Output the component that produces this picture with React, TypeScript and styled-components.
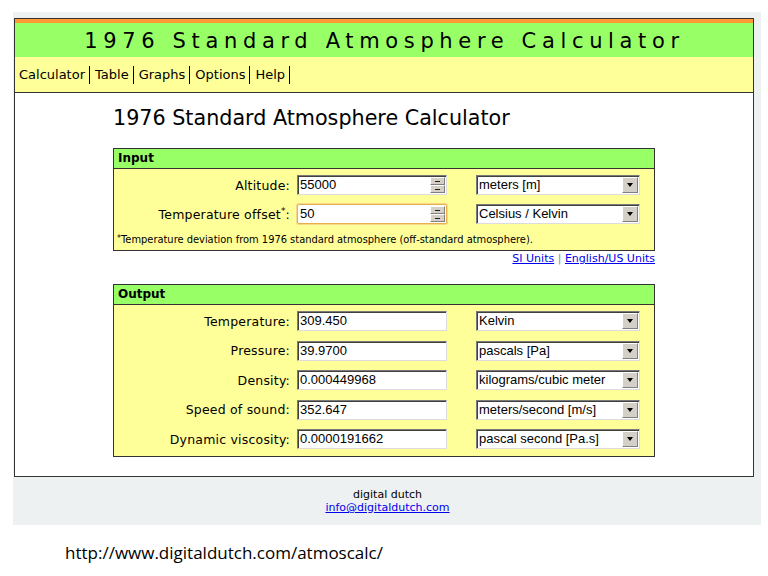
import React from 'react';
import styled, { createGlobalStyle } from 'styled-components';

const colors = {
  orange: '#ff9933',
  green: '#99ff66',
  yellow: '#ffff99',
  border: '#333333',
  panel: '#eef1f1',
  link: '#0000ee',
  field: '#7a7a7a',
  button: '#d4d0c8',
};

const verdana = '"DejaVu Sans", Verdana, sans-serif';
const arial = '"Liberation Sans", Arial, sans-serif';

const GlobalStyle = createGlobalStyle`
  html, body {
    margin: 0;
    padding: 0;
    background: #ffffff;
  }
  body {
    font-family: ${verdana};
    color: #000;
  }
`;

const Page = styled.div`
  padding: 12px 0 0 13px;
  width: 768px;
  height: 576px;
  box-sizing: border-box;
`;

const Panel = styled.div`
  width: 748px;
  height: 513px;
  background: ${colors.panel};
  padding: 6px 0 0 1px;
  box-sizing: border-box;
`;

const Frame = styled.div`
  width: 740px;
  height: 459px;
  box-sizing: border-box;
  border: 1px solid ${colors.border};
  background: #fff;
  display: flex;
  flex-direction: column;
`;

const Stripe = styled.div`
  height: 4px;
  background: ${colors.orange};
`;

const Banner = styled.h1`
  margin: 0;
  height: 34px;
  background: ${colors.green};
  font-family: ${verdana};
  font-weight: normal;
  font-size: 21px;
  letter-spacing: 5.65px;
  line-height: 37px;
  text-align: center;
  padding-left: 1px;
`;

const Nav = styled.nav`
  height: 35px;
  background: ${colors.yellow};
  border-bottom: 1px solid ${colors.border};
  display: flex;
  align-items: center;
  padding-left: 3px;
  font-size: 13px;
`;

const NavItem = styled.span`
  padding: 0 4px 0 1px;
  border-right: 1px solid #000;
  line-height: 18px;
  margin-right: 4px;
`;

const Content = styled.main`
  padding: 13px 0 0 98px;
`;

const Heading = styled.h2`
  margin: 0 0 18px 0;
  font-weight: normal;
  font-size: 20.7px;
  line-height: 24px;
`;

const Fieldset = styled.section`
  width: 542px;
  box-sizing: border-box;
  border: 1px solid ${colors.border};
  background: ${colors.yellow};
`;

const Legend = styled.div`
  height: 20px;
  box-sizing: border-box;
  background: ${colors.green};
  border-bottom: 1px solid ${colors.border};
  font-weight: bold;
  font-size: 12px;
  line-height: 19px;
  padding-left: 4px;
`;

const Rows = styled.div<{ $gap: number; $bottom: number }>`
  display: flex;
  flex-direction: column;
  gap: ${(p) => p.$gap}px;
  padding: 6px 0 ${(p) => p.$bottom}px;
`;

const Row = styled.div`
  display: grid;
  grid-template-columns: 176px 150px 186px;
  column-gap: 7px;
  align-items: center;
  height: 20px;
  & > :nth-child(3) {
    margin-left: 22px;
  }
`;

const Label = styled.label`
  text-align: right;
  font-size: 12.5px;
  letter-spacing: 0.2px;
  sup {
    font-size: 9px;
    vertical-align: 5px;
    line-height: 0;
  }
`;

const Field = styled.div<{ $focus?: boolean }>`
  position: relative;
  height: 20px;
  box-sizing: border-box;
  background: #fff;
  border: 1px solid ${(p) => (p.$focus ? '#e8b04a' : colors.field)};
  border-right-color: ${(p) => (p.$focus ? '#e8b04a' : '#dcdcdc')};
  border-bottom-color: ${(p) => (p.$focus ? '#e8b04a' : '#dcdcdc')};
  border-radius: ${(p) => (p.$focus ? '2px' : '0')};
  box-shadow: ${(p) => (p.$focus ? '0 0 0 1px #f6d88a' : 'inset 1px 1px 0 #404040')};
  font-family: ${arial};
  font-size: 13px;
  line-height: 18px;
  padding-left: 2px;
  white-space: nowrap;
  overflow: hidden;
`;

const Spinner = styled.div`
  position: absolute;
  right: 1px;
  top: 1px;
  bottom: 1px;
  width: 15px;
  display: flex;
  flex-direction: column;
`;

const SpinButton = styled.div`
  flex: 1;
  background: ${colors.button};
  border: 1px solid #fff;
  border-right-color: #808080;
  border-bottom-color: #808080;
  display: flex;
  align-items: center;
  justify-content: center;
  &::after {
    content: '';
    width: 5px;
    height: 1px;
    background: #222;
  }
`;

const Select = styled(Field)`
  padding-right: 18px;
`;

const DropButton = styled.div`
  position: absolute;
  right: 1px;
  top: 1px;
  bottom: 1px;
  width: 16px;
  box-sizing: border-box;
  background: ${colors.button};
  border: 1px solid #fff;
  border-right-color: #808080;
  border-bottom-color: #808080;
  display: flex;
  align-items: center;
  justify-content: center;
  &::after {
    content: '';
    border-left: 3.5px solid transparent;
    border-right: 3.5px solid transparent;
    border-top: 4px solid #000;
  }
`;

const Note = styled.div`
  font-size: 9.9px;
  padding: 10px 0 4px 3px;
  line-height: 12px;
  sup {
    font-size: 8px;
    vertical-align: 2px;
    line-height: 0;
  }
`;

const UnitLinks = styled.div`
  width: 542px;
  text-align: right;
  font-size: 11px;
  line-height: 13px;
  padding-top: 1px;
  margin-bottom: 19px;
  color: #888;
  a {
    color: ${colors.link};
    text-decoration: underline;
  }
`;

const Footer = styled.footer`
  text-align: center;
  font-size: 11px;
  line-height: 13px;
  padding-top: 11px;
  a {
    color: ${colors.link};
    text-decoration: underline;
  }
`;

const Url = styled.div`
  font-family: "Open Sans", sans-serif;
  font-size: 17px;
  padding: 16px 0 0 52px;
`;

const NumberInput = ({ value, focus }: { value: string; focus?: boolean }) => (
  <Field $focus={focus}>
    {value}
    <Spinner>
      <SpinButton />
      <SpinButton />
    </Spinner>
  </Field>
);

const Dropdown = ({ value }: { value: string }) => (
  <Select>
    {value}
    <DropButton />
  </Select>
);

const outputs = [
  { label: 'Temperature:', value: '309.450', unit: 'Kelvin' },
  { label: 'Pressure:', value: '39.9700', unit: 'pascals [Pa]' },
  { label: 'Density:', value: '0.000449968', unit: 'kilograms/cubic meter' },
  { label: 'Speed of sound:', value: '352.647', unit: 'meters/second [m/s]' },
  { label: 'Dynamic viscosity:', value: '0.0000191662', unit: 'pascal second [Pa.s]' },
];

const navItems = ['Calculator', 'Table', 'Graphs', 'Options', 'Help'];

export default function App() {
  return (
    <>
      <GlobalStyle />
      <Page>
        <Panel>
          <Frame>
            <Stripe />
            <Banner>1976 Standard Atmosphere Calculator</Banner>
            <Nav>
              {navItems.map((item) => (
                <NavItem key={item}>{item}</NavItem>
              ))}
            </Nav>
            <Content>
              <Heading>1976 Standard Atmosphere Calculator</Heading>
              <Fieldset>
                <Legend>Input</Legend>
                <Rows $gap={9} $bottom={0}>
                  <Row>
                    <Label>Altitude:</Label>
                    <NumberInput value="55000" />
                    <Dropdown value="meters [m]" />
                  </Row>
                  <Row>
                    <Label>
                      Temperature offset<sup>*</sup>:
                    </Label>
                    <NumberInput value="50" focus />
                    <Dropdown value="Celsius / Kelvin" />
                  </Row>
                </Rows>
                <Note>
                  <sup>*</sup>Temperature deviation from 1976 standard atmosphere (off-standard atmosphere).
                </Note>
              </Fieldset>
              <UnitLinks>
                <a>SI Units</a> | <a>English/US Units</a>
              </UnitLinks>
              <Fieldset>
                <Legend>Output</Legend>
                <Rows $gap={9.5} $bottom={7}>
                  {outputs.map((o) => (
                    <Row key={o.label}>
                      <Label>{o.label}</Label>
                      <Field>{o.value}</Field>
                      <Dropdown value={o.unit} />
                    </Row>
                  ))}
                </Rows>
              </Fieldset>
            </Content>
          </Frame>
          <Footer>
            <div>digital dutch</div>
            <a>info@digitaldutch.com</a>
          </Footer>
        </Panel>
        <Url>http://www.digitaldutch.com/atmoscalc/</Url>
      </Page>
    </>
  );
}
